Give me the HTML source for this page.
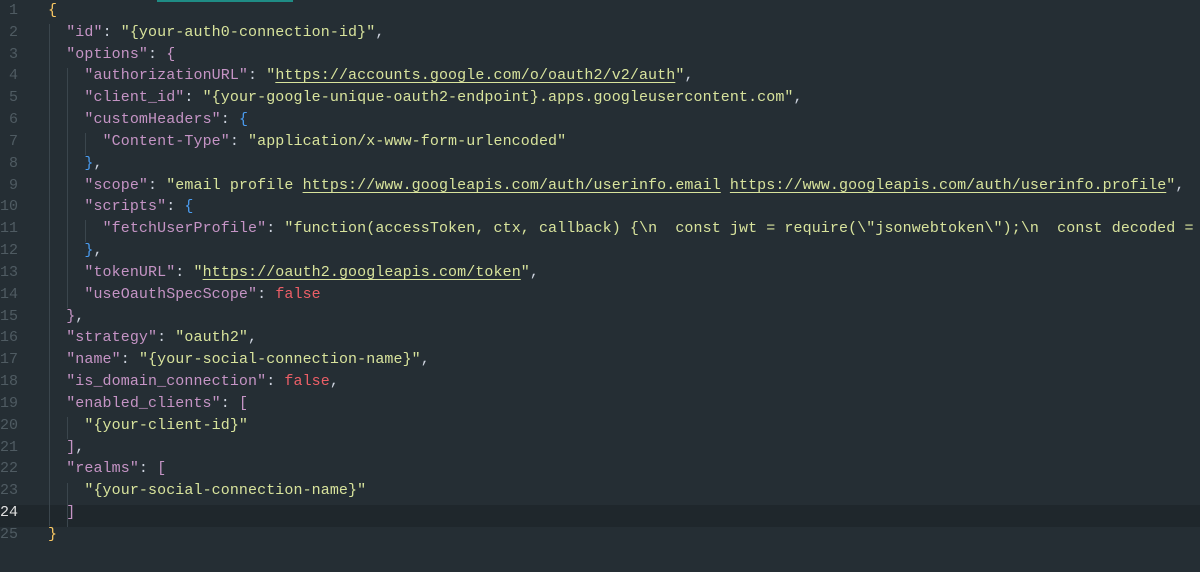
<!DOCTYPE html>
<html><head><meta charset="utf-8"><style>
html,body{margin:0;padding:0;width:1200px;height:572px;overflow:hidden;}
body{background:#252e34;font-family:"Liberation Mono",monospace;font-size:15px;position:relative;}
.ln{position:absolute;left:0;width:18px;text-align:right;color:#4f5b62;}
.l{position:absolute;left:48px;right:0;overflow:hidden;white-space:pre;color:#d0d4d6;letter-spacing:0.09px;}
.row{position:absolute;left:0;width:1200px;height:22px;}
.k{color:#c594c5}.s{color:#d8e39c}.p{color:#cdd3de}.f{color:#ec5f67}
.u{text-decoration:underline;text-underline-offset:3px}
.y{color:#fac863}.m{color:#c594c5}.b{color:#4a9cf0}
.g{position:absolute;width:1px;background:#3b464d;}
</style></head><body>
<div style="position:absolute;left:157px;top:0;width:136px;height:2px;background:#1f8c85"></div>
<div class="row" style="top:505px;background:#1f272c"></div>
<div class="g" style="left:49px;top:24px;height:502px"></div>
<div class="g" style="left:67px;top:68px;height:240px"></div>
<div class="g" style="left:85px;top:133px;height:22px"></div>
<div class="g" style="left:85px;top:220px;height:22px"></div>
<div class="g" style="left:67px;top:417px;height:22px"></div>
<div class="g" style="left:67px;top:483px;height:44px"></div>
<div id="c"></div>
<script>
var L=[
'<span class="y">{</span>',
'  <span class="k">"id"</span><span class="p">: </span><span class="s">"{your-auth0-connection-id}"</span><span class="p">,</span>',
'  <span class="k">"options"</span><span class="p">: </span><span class="m">{</span>',
'    <span class="k">"authorizationURL"</span><span class="p">: </span><span class="s">"<span class="u">https://accounts.google.com/o/oauth2/v2/auth</span>"</span><span class="p">,</span>',
'    <span class="k">"client_id"</span><span class="p">: </span><span class="s">"{your-google-unique-oauth2-endpoint}.apps.googleusercontent.com"</span><span class="p">,</span>',
'    <span class="k">"customHeaders"</span><span class="p">: </span><span class="b">{</span>',
'      <span class="k">"Content-Type"</span><span class="p">: </span><span class="s">"application/x-www-form-urlencoded"</span>',
'    <span class="b">}</span><span class="p">,</span>',
'    <span class="k">"scope"</span><span class="p">: </span><span class="s">"email profile <span class="u">https://www.googleapis.com/auth/userinfo.email</span> <span class="u">https://www.googleapis.com/auth/userinfo.profile</span>"</span><span class="p">,</span>',
'    <span class="k">"scripts"</span><span class="p">: </span><span class="b">{</span>',
'      <span class="k">"fetchUserProfile"</span><span class="p">: </span><span class="s">"function(accessToken, ctx, callback) {\\n  const jwt = require(\\"jsonwebtoken\\");\\n  const decoded = jwt.decode(accessToken);</span>',
'    <span class="b">}</span><span class="p">,</span>',
'    <span class="k">"tokenURL"</span><span class="p">: </span><span class="s">"<span class="u">https://oauth2.googleapis.com/token</span>"</span><span class="p">,</span>',
'    <span class="k">"useOauthSpecScope"</span><span class="p">: </span><span class="f">false</span>',
'  <span class="m">}</span><span class="p">,</span>',
'  <span class="k">"strategy"</span><span class="p">: </span><span class="s">"oauth2"</span><span class="p">,</span>',
'  <span class="k">"name"</span><span class="p">: </span><span class="s">"{your-social-connection-name}"</span><span class="p">,</span>',
'  <span class="k">"is_domain_connection"</span><span class="p">: </span><span class="f">false</span><span class="p">,</span>',
'  <span class="k">"enabled_clients"</span><span class="p">: </span><span class="m">[</span>',
'    <span class="s">"{your-client-id}"</span>',
'  <span class="m">]</span><span class="p">,</span>',
'  <span class="k">"realms"</span><span class="p">: </span><span class="m">[</span>',
'    <span class="s">"{your-social-connection-name}"</span>',
'  <span class="m">]</span>',
'<span class="y">}</span>'
];
var h='';
for(var i=0;i<L.length;i++){var t=2+i*21.83;
h+='<div class="ln" style="top:'+t+'px;'+(i==23?'color:#e0e0e0':'')+'">'+(i+1)+'</div>';
h+='<div class="l" style="top:'+t+'px">'+L[i]+'</div>';}
document.getElementById('c').innerHTML=h;
</script>
</body></html>
